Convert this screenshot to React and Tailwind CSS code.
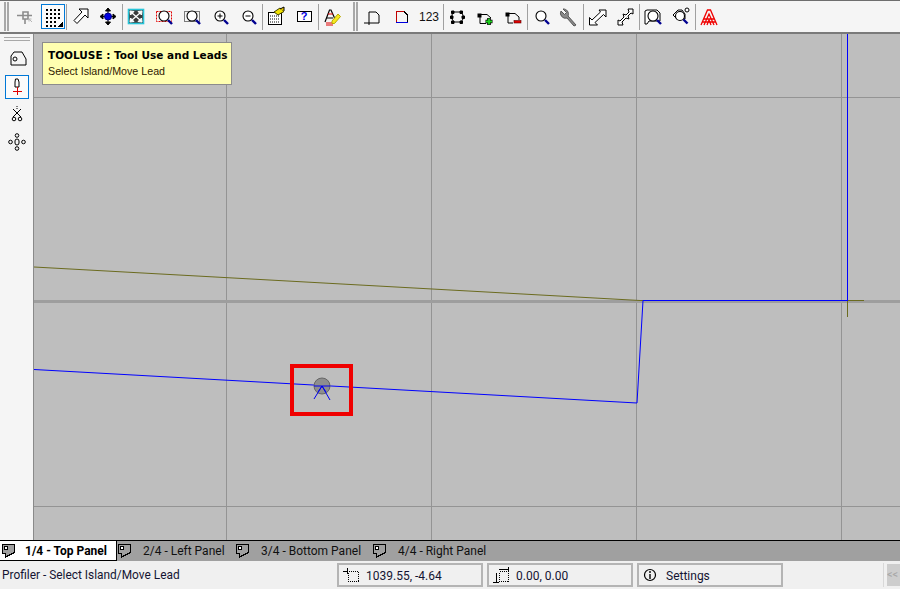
import React from 'react';

// small 24x24 toolbar glyphs, crisp like the original bitmaps
const Ico = ({ children, size = 24 }) => (
  <svg width={size} height={size} viewBox="0 0 24 24" fill="none" stroke="#000" strokeWidth="1">
    {children}
  </svg>
);

const Mag = ({ cx = 12, cy = 11, r = 5 }) => (
  <>
    <circle cx={cx} cy={cy} r={r} fill="#fff" stroke="#000" strokeWidth="1.1" />
    <path d={`M${cx + r - 1} ${cy + r - 1}L${cx + r + 3} ${cy + r + 3}`} stroke="#000090" strokeWidth="2.4" />
  </>
);

const PanelGlyph = () => (
  <svg width="14" height="14" viewBox="0 0 14 14" fill="#a0a0a0" stroke="#000" className="shrink-0" shapeRendering="crispEdges">
    <path d="M.5 .5H12.5V8.5L3.5 13V9.5H.5Z" />
    <rect x="2.5" y="2.5" width="3" height="3" fill="#fff" />
  </svg>
);

const ToolButton = ({ children }) => (
  <div className="w-7 h-[25px] shrink-0 flex items-center justify-center">{children}</div>
);

const Sep = () => <div className="w-px -mr-px h-[26px] bg-[#a0a0a0] shrink-0" />;

const Grip = ({ className }) => (
  <div className={`flex gap-px h-[29px] shrink-0 ${className}`}>
    <div className="w-[2px] bg-[#a8a8a8]" />
    <div className="w-[2px] bg-[#a8a8a8]" />
  </div>
);

const Toolbar = () => (
  <div className="h-[34px] shrink-0 flex items-center bg-[#f5f5f5] border-t border-t-[#6e6e6e] border-b-2 border-b-[#7a7a7a]">
    <Grip className="ml-[4px] mr-[2px]" />
    <ToolButton>
      <Ico>
        <path d="M4 10.5H19M12 7H15V14H10V7Z" stroke="#8c8c8c" strokeWidth="1.6" />
        <path d="M12 14V19" stroke="#8c8c8c" strokeWidth="1.6" />
        <path d="M16 14L19 17M16 14H18.5M16 14V16.5" stroke="#b5b5b5" />
      </Ico>
    </ToolButton>
    <div className="w-[24px] h-[25px] ml-[2px] mr-px shrink-0 flex items-center justify-center border border-[#0078d7] bg-[#fbfbfb]">
      <svg width="22" height="23" viewBox="0 0 22 23" fill="none" shapeRendering="crispEdges">
        <path d="M4 5H6M8 5H10M12 5H14M16 5H18M4 9H6M8 9H10M12 9H14M16 9H18M4 13H6M8 13H10M12 13H14M16 13H18M4 17H6M8 17H10M12 17H14M4 21H6M8 21H10M12 21H14" stroke="#000" strokeWidth="2" />
        <path d="M21 16V22H15Z" fill="#000" />
      </svg>
    </div>
    <Sep />
    <ToolButton>
      <Ico>
        <path d="M11 4H20V13L17 10L9 18.5L6 15.5L14 7Z" fill="#fff" />
      </Ico>
    </ToolButton>
    <ToolButton>
      <Ico>
        <path d="M12 3L14.5 6H9.5ZM12 20L14.5 17H9.5ZM4 11.5L7 9V14ZM20 11.5L17 9V14Z" fill="#000" />
        <path d="M5 11.5H19M12 4V19" stroke="#000" />
        <circle cx="12" cy="11.5" r="3.5" fill="#0000e0" stroke="#00008b" />
      </Ico>
    </ToolButton>
    <Sep />
    <ToolButton>
      <Ico>
        <rect x="4.5" y="4.5" width="15" height="14" fill="#3c3c3c" stroke="#27c4d8" strokeWidth="1.6" />
        <path d="M6 6L10 6.5L6.5 10ZM18 6L14 6.5L17.5 10ZM6 17L10 16.5L6.5 13ZM18 17L14 16.5L17.5 13Z" fill="#fff" stroke="#fff" />
        <path d="M8 8L16 15M16 8L8 15" stroke="#fff" strokeWidth="1.3" />
      </Ico>
    </ToolButton>
    <ToolButton>
      <Ico>
        <rect x="4.5" y="6.5" width="15" height="10" stroke="#e00000" strokeDasharray="2 1" />
        <Mag />
      </Ico>
    </ToolButton>
    <ToolButton>
      <Ico>
        <rect x="4.5" y="6.5" width="15" height="10" stroke="#000" strokeDasharray="1 1" />
        <Mag />
      </Ico>
    </ToolButton>
    <ToolButton>
      <Ico>
        <Mag />
        <path d="M9.5 11H14.5M12 8.5V13.5" />
      </Ico>
    </ToolButton>
    <ToolButton>
      <Ico>
        <Mag />
        <path d="M9.5 11H14.5" />
      </Ico>
    </ToolButton>
    <Sep />
    <ToolButton>
      <Ico>
        <rect x="4.5" y="7.5" width="13" height="12" fill="#fff" />
        <path d="M6 11H16M6 14H16M6 17H16" strokeDasharray="1 1" />
        <path d="M10 7L16 3L20 6.5L14 10Z" fill="#f0e000" stroke="#3a3a00" />
        <path d="M16 4L20 2V6" fill="#e8c800" stroke="#000" />
      </Ico>
    </ToolButton>
    <ToolButton>
      <div className="w-[15px] h-[11px] border border-black bg-white flex items-center justify-center text-[#0000e0] text-[11px] font-bold leading-none font-['Liberation_Sans',sans-serif]">
        ?
      </div>
    </ToolButton>
    <Sep />
    <ToolButton>
      <Ico>
        <path d="M5 17L9.5 5H11L15 14" stroke="#000" strokeWidth="1.2" />
        <path d="M7 13H13" stroke="#000" />
        <path d="M8 9H13M6 18H13M6 20H13" stroke="#e00000" />
        <path d="M12 16L18 9L20.5 11.5L14.5 18.5H12Z" fill="#f5e820" stroke="#b8a800" />
      </Ico>
    </ToolButton>
    <Grip className="ml-[7px] mr-px" />
    <ToolButton>
      <Ico>
        <path d="M8 20V7H15L18 10V18M3 18H18" />
      </Ico>
    </ToolButton>
    <ToolButton>
      <svg width="24" height="24" viewBox="0 0 24 24" fill="none" shapeRendering="crispEdges">
        <path d="M15 6.5L18.5 10V17" stroke="#000" />
        <path d="M7.5 17V6.5H15" stroke="#c00000" />
        <path d="M7 17.5H19" stroke="#0000e0" />
      </svg>
    </ToolButton>
    <ToolButton>
      <span className="text-[12px] leading-none text-[#111] font-['Liberation_Sans',sans-serif]">123</span>
    </ToolButton>
    <Sep />
    <ToolButton>
      <Ico>
        <path d="M8 7H16L18 10V14L16 17H9L7 14V10Z" />
        <path d="M6.5 6H9V8.5H6.5ZM15 6H17.5V8.5H15ZM5.5 11H8V13.5H5.5ZM17 11H19.5V13.5H17ZM6.5 16H9V18.5H6.5ZM15 16H17.5V18.5H15Z" fill="#000" />
      </Ico>
    </ToolButton>
    <ToolButton>
      <Ico>
        <path d="M7 9.5H14L18 13M7 18.5H13M7 9.5V18.5" />
        <rect x="5" y="9" width="3" height="3" fill="#000" />
        <path d="M16 13V20M12.5 16.5H19.5" stroke="#000" strokeWidth="3.6" />
        <path d="M16 13.5V19.5M13 16.5H19" stroke="#1fd41f" strokeWidth="1.8" />
      </Ico>
    </ToolButton>
    <ToolButton>
      <Ico>
        <path d="M7 8.5H14L18 12V15M7 18H12M7 8.5V18" />
        <rect x="5" y="8" width="3" height="3" fill="#000" />
        <rect x="13" y="15.5" width="7" height="2.5" fill="#e00000" stroke="#600000" strokeWidth="0.6" />
      </Ico>
    </ToolButton>
    <Sep />
    <ToolButton>
      <Ico>
        <Mag />
      </Ico>
    </ToolButton>
    <ToolButton>
      <Ico>
        <path d="M19 20L11 11A5 5 0 0 0 6 4L9.5 7.5L7.5 9.5L4 6A5 5 0 0 0 10 13L17 21Z" fill="#8a8a8a" stroke="#555" />
      </Ico>
    </ToolButton>
    <Sep />
    <ToolButton>
      <Ico>
        <path d="M14 5H21V12L18.5 9.5L10 17.5L12.5 20H4.5V12.5L7 15L15.5 7Z" fill="#fff" />
      </Ico>
    </ToolButton>
    <ToolButton>
      <Ico>
        <path d="M15 4H20V9L18 8L15 11L16 14L13 13L9 17L10 20H5V15L7 16L11 12L10 9L13 10L16 7Z" fill="#fff" />
      </Ico>
    </ToolButton>
    <Sep />
    <ToolButton>
      <Ico>
        <path d="M6 5H16L19 8V16H8L6 19H4V6Z" fill="#fff" />
        <Mag />
      </Ico>
    </ToolButton>
    <ToolButton>
      <Ico>
        <path d="M4 10L9 5H13L16 9V14H8Z" />
        <circle cx="18" cy="5" r="2" fill="#fff" />
        <Mag cx={11} cy={11} r={4.5} />
      </Ico>
    </ToolButton>
    <Sep />
    <ToolButton>
      <Ico>
        <path d="M4 20L10.5 5H13.5L20 20M7 20L12 9L17 20M10 20L12 15L14 20M7 14H17M5 17H19" stroke="#f00000" strokeWidth="1.3" />
      </Ico>
    </ToolButton>
  </div>
);

const SideBar = () => (
  <div className="w-[34px] shrink-0 flex flex-col items-center bg-[#f5f5f5] border-r border-r-[#8a8a8a]">
    <div className="w-[26px] h-[4px] mt-[3px] border-y border-[#a8a8a8]" />
    <div className="mt-[5px] h-[24px] flex items-center justify-center">
      <Ico>
        <path d="M6 19H21V13L17 6H9L6 10V19Z" />
        <circle cx="10" cy="13" r="2" />
      </Ico>
    </div>
    <div className="mt-[5px] w-[24px] h-[24px] flex items-center justify-center border border-[#0078d7] bg-[#fbfbfb]">
      <svg width="22" height="22" viewBox="0 0 22 22" fill="none" stroke="#000">
        <path d="M9.5 3H12L13 6V11H9V6Z" />
        <path d="M11.5 11V19M7 15.5H16" stroke="#e00000" />
      </svg>
    </div>
    <div className="mt-[3px] h-[24px] flex items-center justify-center">
      <Ico>
        <path d="M8 7L16 15M16 7L8 15" />
        <circle cx="9" cy="17" r="1.8" />
        <circle cx="15" cy="17" r="1.8" />
        <path d="M12 4V8" strokeDasharray="1 1" />
      </Ico>
    </div>
    <div className="mt-[4px] h-[24px] flex items-center justify-center">
      <Ico>
        <rect x="10" y="9" width="4" height="6" rx="2" />
        <circle cx="12" cy="5.5" r="1.8" />
        <circle cx="12" cy="18.5" r="1.8" />
        <circle cx="5.5" cy="12" r="1.8" />
        <circle cx="18.5" cy="12" r="1.8" />
      </Ico>
    </div>
  </div>
);

// svg viewBox uses page coords, canvas starts at (34, 34)
const Canvas = () => (
  <div className="relative flex-1 bg-[#bebebe] overflow-hidden">
    <svg className="absolute inset-0" width="866" height="506" viewBox="34 34 866 506" fill="none" shapeRendering="crispEdges">
      <path d="M226.5 34V540M431.5 34V540M636.5 34V540M841.5 34V540M33 97.5H900M33 506.5H900" stroke="#949494" />
      <path d="M33 301.5H900" stroke="#9e9e9e" strokeWidth="3" />
      <path d="M34 267L640 300.5" stroke="#6b6b1f" shapeRendering="auto" />
      <path d="M640 300.5H864M847.5 300V317" stroke="#6b6b1f" />
      <path d="M34 369.5L637 403L643 300.5" stroke="#0000ff" shapeRendering="auto" />
      <path d="M643 300.5H847.5V34" stroke="#0000ff" />
      <rect x="292" y="366" width="59" height="48" stroke="#f00000" strokeWidth="4" />
      <g shapeRendering="auto">
        <circle cx="322" cy="386" r="8" fill="#8e8e8e" stroke="#666" />
        <path d="M314 386H330M322 386L314 399M322 386L330 400M322 386L318 392M322 386L326 392" stroke="#0000f0" />
      </g>
    </svg>
    <div className="absolute left-[8px] top-[8px] w-[190px] h-[43px] bg-[#ffffb0] border border-[#8c8c8c] pl-[5px] pt-[5px]">
      <div className="text-[10.5px] leading-[14px] font-bold text-black font-['DejaVu_Sans',sans-serif] whitespace-nowrap">
        TOOLUSE : Tool Use and Leads
      </div>
      <div className="mt-[3px] text-[10.7px] leading-[13px] text-[#302000] font-['Liberation_Sans',sans-serif] whitespace-nowrap">
        Select Island/Move Lead
      </div>
    </div>
  </div>
);

const tabs = [
  { label: '2/4 - Left Panel', width: 'w-[118px]' },
  { label: '3/4 - Bottom Panel', width: 'w-[137px]' },
  { label: '4/4 - Right Panel', width: 'w-[126px]' },
];

const TabStrip = () => (
  <div className="h-[21px] shrink-0 flex bg-[#a0a0a0] border-t border-t-black text-[12px] text-[#101010] font-['Roboto',sans-serif]">
    <div className="w-[117px] flex items-center gap-[9px] pl-[2px] bg-white border-b border-r border-black font-bold text-black whitespace-nowrap">
      <PanelGlyph />
      <span>1/4 - Top Panel</span>
    </div>
    {tabs.map((t) => (
      <div key={t.label} className={`${t.width} flex items-center gap-[11px] pl-[1px] whitespace-nowrap`}>
        <PanelGlyph />
        <span>{t.label}</span>
      </div>
    ))}
  </div>
);

const StatusBox = ({ icon, text, gap }) => (
  <div className={`w-[146px] h-[24px] shrink-0 flex items-center ${gap} pl-[4px] border-2 border-[#b4b4b4]`}>
    {icon}
    <span className="pt-px">{text}</span>
  </div>
);

const StatusBar = () => (
  <div className="flex-1 flex items-center bg-[#f0f0f0] text-[12px] text-[#141432] font-['Roboto',sans-serif]">
    <div className="w-[337px] pl-[2px] pt-px shrink-0 whitespace-nowrap text-[11.9px]">Profiler - Select Island/Move Lead</div>
    <div className="flex gap-[4px]">
      <StatusBox
        gap="gap-[7px]"
        text="1039.55, -4.64"
        icon={
          <svg width="16" height="16" viewBox="0 0 16 16" fill="none" stroke="#000" shapeRendering="crispEdges">
            <path d="M0 4.5H5M4.5 1V7" />
            <rect x="5.5" y="4.5" width="10" height="10" strokeDasharray="1 1" />
          </svg>
        }
      />
      <StatusBox
        gap="gap-[7px]"
        text="0.00, 0.00"
        icon={
          <svg width="16" height="16" viewBox="0 0 16 16" fill="none" stroke="#000" shapeRendering="crispEdges">
            <path d="M0 15.5H6M3 6V15M6 2.5H15M15.5 0V5" />
            <rect x="6.5" y="4.5" width="9" height="10" strokeDasharray="1 1" />
          </svg>
        }
      />
      <StatusBox
        gap="gap-[9px]"
        text="Settings"
        icon={
          <svg width="14" height="14" viewBox="0 0 14 14" fill="none" stroke="#000">
            <circle cx="7" cy="7" r="5.5" strokeWidth="1.2" />
            <path d="M7 6V11M7 3V5" strokeWidth="1.4" />
          </svg>
        }
      />
    </div>
    <div className="ml-auto h-[24px] w-px bg-[#d8d8d8]" />
    <div className="ml-[3px] w-[13px] h-[22px] bg-[#cdcdcd] text-[#a8a8a8] text-[11px] leading-[22px] overflow-hidden">
      &lt;&lt;
    </div>
  </div>
);

export default function App() {
  return (
    <div className="w-[900px] h-[589px] flex flex-col overflow-hidden bg-[#f0f0f0]">
      <Toolbar />
      <div className="h-[506px] shrink-0 flex">
        <SideBar />
        <Canvas />
      </div>
      <TabStrip />
      <StatusBar />
    </div>
  );
}
